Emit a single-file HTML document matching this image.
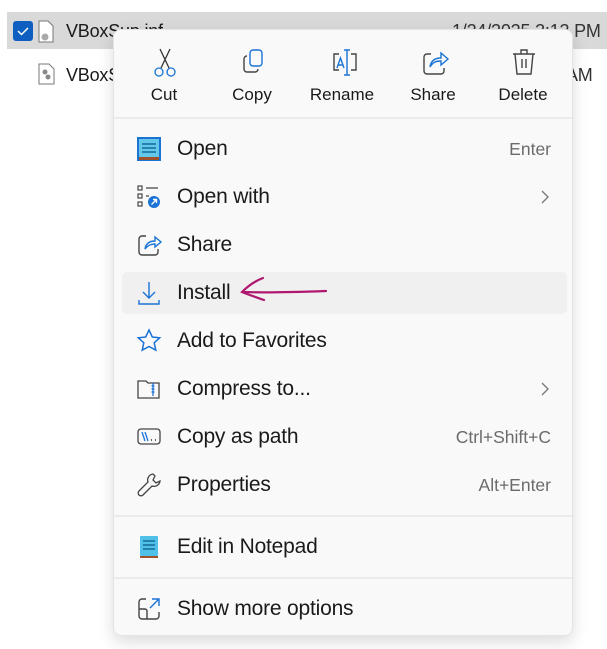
<!DOCTYPE html>
<html><head><meta charset="utf-8"><style>
*{margin:0;padding:0;box-sizing:border-box}
body{width:607px;height:649px;background:#fff;position:relative;overflow:hidden;font-family:"Liberation Sans",sans-serif;color:#1a1a1a}
.row{position:absolute;left:7px;top:12px;width:600px;height:37px;background:#d9d9d9}
.t{position:absolute;font-size:18px;letter-spacing:-0.2px}
.menu{position:absolute;left:113px;top:29px;width:460px;height:607px;background:#f9f9f9;border:1px solid #e4e4e4;border-radius:8px;box-shadow:0 6px 16px rgba(0,0,0,.14)}
.tb{position:absolute;top:0;height:88px;width:90px;text-align:center}
.tb svg{position:absolute;left:33px;top:18px}
.tb span{position:absolute;left:0;right:0;top:55px;font-size:17px}
.sep{position:absolute;left:0;right:0;height:2px;background:#ebebeb}
.it{position:absolute;left:8px;width:445px;height:42px;border-radius:5px}
.it svg{position:absolute;left:14px;top:8px}
.it .l{position:absolute;left:55px;top:9px;font-size:21px;letter-spacing:-0.2px}
.it .k{position:absolute;right:16px;top:11px;font-size:17.5px;color:#6b6b6b}
.it .a{position:absolute;right:18px;top:14px}
</style></head><body>
<div class="row"></div>
<div style="position:absolute;left:13px;top:21px;width:20px;height:20px;background:#0f5fc0;border-radius:3px"><svg width="20" height="20"><path d="M5 10l3.5 3.5L15 7" stroke="#fff" stroke-width="1.5" fill="none"/></svg></div>
<svg style="position:absolute;left:36px;top:20px" width="20" height="24"><path d="M3 1h9l5 5v16H3z" fill="#fff" stroke="#777"/><circle cx="9" cy="17" r="3.5" fill="#aaa"/></svg>
<div class="t" style="left:66px;top:21px">VBoxSup.inf</div>
<div class="t" style="left:452px;top:21px;color:#333">1/24/2025 3:13 PM</div>
<svg style="position:absolute;left:38px;top:63px" width="18" height="22"><path d="M1 1h10l5 5v15H1z" fill="#fff" stroke="#777"/><circle cx="7" cy="9" r="2.5" fill="#888"/><circle cx="10" cy="14" r="2.5" fill="#888"/></svg>
<div class="t" style="left:66px;top:65px">VBoxSup.cat</div>
<div class="t" style="left:566px;top:65px;color:#333">AM</div>

<div class="menu">
 <div class="tb" style="left:5px"><svg width="26" height="30" fill="none" stroke="#333" stroke-width="1.3"><path d="M8 1l9 19M18 1L9 20"/><circle cx="7" cy="24" r="4" stroke="#1a73d6"/><circle cx="19" cy="24" r="4" stroke="#1a73d6"/></svg><span>Cut</span></div>
 <div class="tb" style="left:93px"><svg width="26" height="30" fill="none" stroke-width="1.4"><rect x="10" y="2" width="12" height="16" rx="3" stroke="#1a73d6"/><path d="M7 8a3 3 0 0 0-3 3v10a3 3 0 0 0 3 3h8a3 3 0 0 0 3-3" stroke="#444"/></svg><span>Copy</span></div>
 <div class="tb" style="left:183px"><svg width="30" height="30" fill="none" stroke-width="1.4"><path d="M9 6H4v16h5M21 6h5v16h-5" stroke="#444"/><path d="M17 2v25M14 2h6M14 27h6M7 20l3.5-10 3.5 10M8 17h5" stroke="#1a73d6"/></svg><span>Rename</span></div>
 <div class="tb" style="left:274px"><svg width="30" height="30" fill="none" stroke-width="1.4"><path d="M10 6H6a3 3 0 0 0-3 3v14a3 3 0 0 0 3 3h14a3 3 0 0 0 3-3v-3" stroke="#444"/><path d="M9 19c1-7 6-9 11-9V5l7 6-7 6v-4c-5 0-8 1-11 6z" stroke="#1a73d6"/></svg><span>Share</span></div>
 <div class="tb" style="left:364px"><svg width="26" height="30" fill="none" stroke="#444" stroke-width="1.4"><path d="M2 6h22M10 6V2h6v4M4 6l2 20h14l2-20M11 11v9M15 11v9"/></svg><span>Delete</span></div>
 <div class="sep" style="top:87px"></div>

 <div class="it" style="top:98px"><svg width="26" height="26"><rect x="1" y="1" width="24" height="24" fill="#1b74d4"/><rect x="3" y="3" width="20" height="18" fill="#63c7ea"/><path d="M6 8h14M6 12h14M6 16h14" stroke="#156a99" stroke-width="1.5"/><rect x="3" y="21" width="20" height="3" fill="#a0522d"/></svg><span class="l">Open</span><span class="k">Enter</span></div>
 <div class="it" style="top:146px"><svg width="26" height="26" fill="none" stroke="#444" stroke-width="1.2"><rect x="2" y="2" width="4" height="4"/><rect x="2" y="10" width="4" height="4"/><rect x="2" y="18" width="4" height="4"/><path d="M10 4h12M10 12h3"/><circle cx="18" cy="18" r="6" fill="#1a73d6" stroke="none"/><path d="M15.5 20.5l5-5M17 15.5h3.5V19" stroke="#fff" stroke-width="1.4"/></svg><span class="l">Open with</span><svg class="a" style="left:auto;right:18px;top:14px" width="8" height="14" fill="none" stroke="#777" stroke-width="1.3"><path d="M1 1l6 6-6 6"/></svg></div>
 <div class="it" style="top:194px"><svg width="28" height="26" fill="none" stroke-width="1.4"><path d="M10 4H6a3 3 0 0 0-3 3v13a3 3 0 0 0 3 3h13a3 3 0 0 0 3-3v-3" stroke="#444"/><path d="M9 17c1-6 5-8 10-8V5l6 5-6 5v-3c-4 0-7 1-10 5z" stroke="#1a73d6"/></svg><span class="l">Share</span></div>
 <div class="it" style="top:242px;background:#f0f0f0"><svg width="26" height="26" fill="none" stroke="#1a73d6" stroke-width="1.4"><path d="M13 2v16M7 12l6 6 6-6M3 20v4h20v-4"/></svg><span class="l">Install</span>
  <svg style="position:absolute;left:116px;top:3px" width="90" height="36" fill="none" stroke="#b0176e" stroke-width="2.2" stroke-linecap="round"><path d="M25 3C17 6 10 11 4 17c7 3 14 5 22 8M5 17c25 1 55 0 83-1"/></svg></div>
 <div class="it" style="top:290px"><svg width="26" height="26" fill="none" stroke="#1a73d6" stroke-width="1.5"><path d="M13 2l3.3 7 7.4.8-5.5 5 1.6 7.4L13 18.5 6.2 22.2l1.6-7.4-5.5-5 7.4-.8z"/></svg><span class="l">Add to Favorites</span></div>
 <div class="it" style="top:338px"><svg width="26" height="26" fill="none" stroke-width="1.3"><path d="M2 5h8l2 2h11v15H2z" stroke="#444"/><path d="M17 7v13M15.5 10h3M15.5 13h3M15.5 16h3" stroke="#1a73d6"/></svg><span class="l">Compress to...</span><svg class="a" style="left:auto;right:18px;top:14px" width="8" height="14" fill="none" stroke="#777" stroke-width="1.3"><path d="M1 1l6 6-6 6"/></svg></div>
 <div class="it" style="top:386px"><svg width="26" height="26" fill="none" stroke-width="1.3"><rect x="2" y="5" width="22" height="15" rx="3" stroke="#444"/><path d="M6 8l3 9M9 8l3 9" stroke="#1a73d6"/><path d="M15 16h1M19 16h1" stroke="#444" stroke-width="1.8"/></svg><span class="l">Copy as path</span><span class="k">Ctrl+Shift+C</span></div>
 <div class="it" style="top:434px"><svg width="26" height="26" fill="none" stroke="#444" stroke-width="1.3"><path d="M17 2a6 6 0 0 0-5 8L3 19a2.5 2.5 0 0 0 4 4l9-9a6 6 0 0 0 8-5l-4 2-3-3 2-4z"/></svg><span class="l">Properties</span><span class="k">Alt+Enter</span></div>
 <div class="sep" style="top:485px"></div>
 <div class="it" style="top:496px"><svg width="26" height="26"><rect x="4" y="2" width="18" height="20" rx="1" fill="#4fc0e8"/><path d="M7 7h12M7 11h12M7 15h12" stroke="#156a99" stroke-width="1.5"/><rect x="4" y="22" width="18" height="2" fill="#a0522d"/></svg><span class="l">Edit in Notepad</span></div>
 <div class="sep" style="top:547px"></div>
 <div class="it" style="top:558px"><svg width="26" height="26" fill="none" stroke-width="1.4"><path d="M10 3H6a3 3 0 0 0-3 3v14a3 3 0 0 0 3 3h14a3 3 0 0 0 3-3v-4M3 13h6a2 2 0 0 1 2 2v8" stroke="#444"/><path d="M14 12l9-9M16 3h7v7" stroke="#1a73d6"/></svg><span class="l">Show more options</span></div>
</div>
</body></html>
